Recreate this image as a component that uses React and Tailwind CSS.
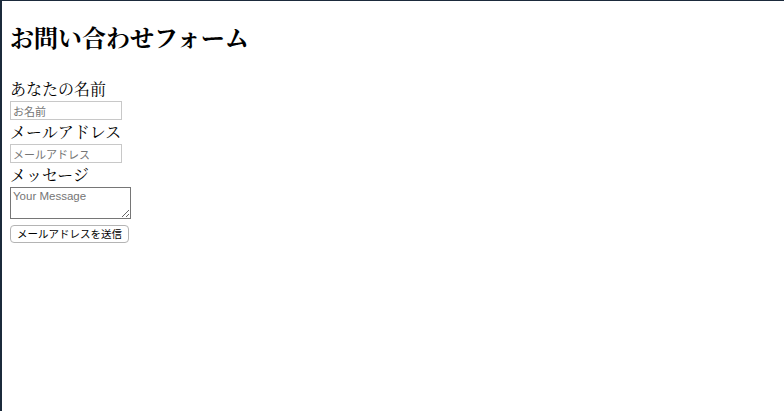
export default function App() {
  return (
    <div className="w-[784px] h-[411px] bg-white border-l-2 border-t border-[#1b2a3b] overflow-hidden">
      <div className="px-[8px] pt-[18px]">
        <h2 className="text-[24px] font-bold leading-[36px] text-black font-['Noto_Serif_CJK_JP','Noto_Sans_CJK_JP',serif]">
          お問い合わせフォーム
        </h2>
        <form className="mt-[22px] flex flex-col items-start">
          <label className="block text-[16px] leading-[24px] text-black font-['Noto_Serif_CJK_JP','Noto_Sans_CJK_JP',serif]">
            あなたの名前
          </label>
          <input
            type="text"
            placeholder="お名前"
            className="w-[112px] h-[19px] border border-[#c8c8c8] px-[2px] text-[11px] text-black placeholder:text-[#757575] outline-none font-['Noto_Sans_CJK_JP',sans-serif]"
          />
          <label className="block text-[16px] leading-[24px] text-black font-['Noto_Serif_CJK_JP','Noto_Sans_CJK_JP',serif]">
            メールアドレス
          </label>
          <input
            type="email"
            placeholder="メールアドレス"
            className="w-[112px] h-[19px] border border-[#c8c8c8] px-[2px] text-[11px] text-black placeholder:text-[#757575] outline-none font-['Noto_Sans_CJK_JP',sans-serif]"
          />
          <label className="block text-[16px] leading-[24px] text-black font-['Noto_Serif_CJK_JP','Noto_Sans_CJK_JP',serif]">
            メッセージ
          </label>
          <textarea
            placeholder="Your Message"
            className="w-[121px] h-[32px] border border-[#767676] px-[2px] py-[1px] text-[11.5px] leading-[14px] text-black placeholder:text-[#757575] outline-none resize font-['Liberation_Sans',Arial,sans-serif]"
          />
          <button
            type="button"
            className="mt-[6px] h-[18px] px-[6px] rounded-[4px] border border-[#b4b4b4] bg-white text-[10.5px] leading-[16px] text-black font-['Noto_Sans_CJK_JP',sans-serif]"
          >
            メールアドレスを送信
          </button>
        </form>
      </div>
    </div>
  );
}
